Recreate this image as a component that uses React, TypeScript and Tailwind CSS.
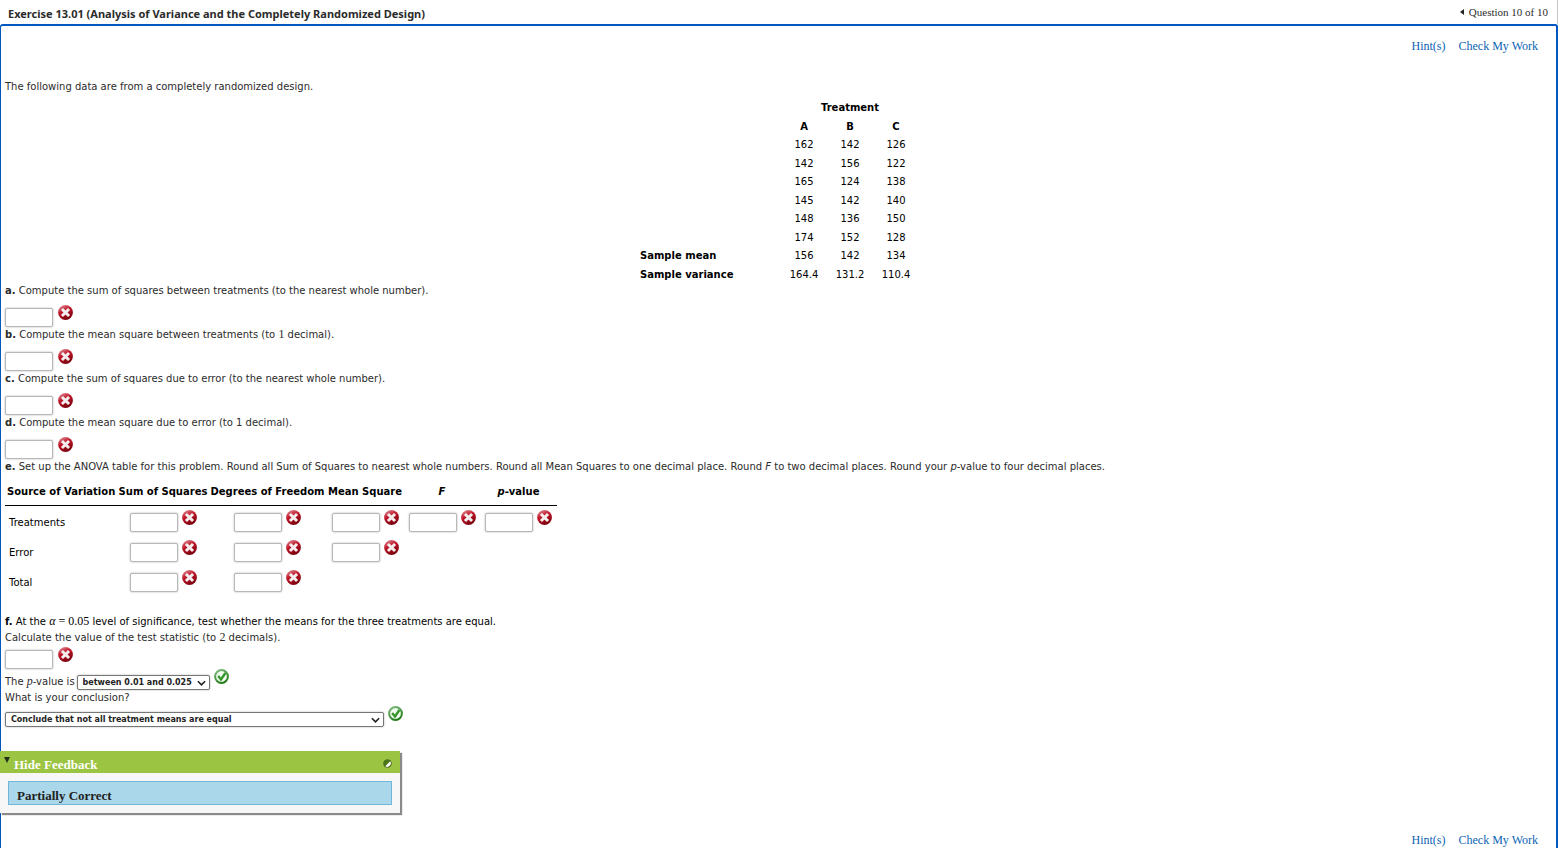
import type { ReactNode } from "react";

const treatmentRows = [
    { label: "", values: ["162", "142", "126"] },
    { label: "", values: ["142", "156", "122"] },
    { label: "", values: ["165", "124", "138"] },
    { label: "", values: ["145", "142", "140"] },
    { label: "", values: ["148", "136", "150"] },
    { label: "", values: ["174", "152", "128"] },
    { label: "Sample mean", values: ["156", "142", "134"] },
    { label: "Sample variance", values: ["164.4", "131.2", "110.4"] },
];

const anovaRows = [
    { label: "Treatments", fields: ["Sum of Squares", "Degrees of Freedom", "Mean Square", "F", "p-value"] },
    { label: "Error", fields: ["Sum of Squares", "Degrees of Freedom", "Mean Square"] },
    { label: "Total", fields: ["Sum of Squares", "Degrees of Freedom"] },
];

const WrongIcon = () => (
    <svg viewBox="0 0 15 15" className="w-[15px] h-[15px] shrink-0" role="img" aria-label="Incorrect">
        <defs>
            <linearGradient id="wrong" x1="0.2" y1="0" x2="0.7" y2="1">
                <stop offset="0" stopColor="#dc8c94" />
                <stop offset="0.4" stopColor="#c01629" />
                <stop offset="1" stopColor="#74000b" />
            </linearGradient>
        </defs>
        <circle cx="7.5" cy="7.5" r="7.4" fill="url(#wrong)" />
        <path d="M5 5l5 5M10 5l-5 5" stroke="#f4eeee" strokeWidth="3" strokeLinecap="square" />
    </svg>
);

const RightIcon = () => (
    <svg viewBox="0 0 15 15" className="w-[15px] h-[15px] shrink-0" role="img" aria-label="Correct">
        <defs>
            <linearGradient id="right" x1="0.2" y1="0" x2="0.7" y2="1">
                <stop offset="0" stopColor="#79b878" />
                <stop offset="1" stopColor="#1d7a12" />
            </linearGradient>
        </defs>
        <circle cx="7.5" cy="7.5" r="6.4" fill="#f1faef" stroke="url(#right)" strokeWidth="2" />
        <path d="M4.2 7l2.8 3.4L11.4 4" fill="none" stroke="#35962a" strokeWidth="2.4" />
    </svg>
);

const Answer = ({ label, className }: { label: string; className: string }) => (
    <div className={`flex items-start ${className}`}>
        <input
            type="text"
            aria-label={label}
            className="mt-[3px] w-12 h-[19px] px-1 rounded-xs border border-[#b8b8b8] bg-white text-[10px] shadow-[0_0_2px_#aaa]"
        />
        <WrongIcon />
    </div>
);

const Question = ({ id, children }: { id: string; children: ReactNode }) => (
    <div className="h-11">
        <p className="leading-[14px]">
            <b>{id}.</b> {children}
        </p>
        <Answer label={`Answer ${id}`} className="mt-[7px] gap-[5px]" />
    </div>
);

const Dropdown = ({ label, value, width }: { label: string; value: string; width: string }) => (
    <div className="flex items-start gap-1">
        <div className={`relative mt-1.5 ${width}`}>
            <select
                aria-label={label}
                className="block appearance-none w-full h-[15px] pl-[5px] pr-4 rounded-xs border border-[#767676] bg-white text-[8px] leading-[13px] font-bold text-[#222] shadow-[0_0_2px_#aaa]"
            >
                <option>{value}</option>
            </select>
            <svg viewBox="0 0 10 6" className="absolute right-1 top-[5px] w-[9px] h-[6px] pointer-events-none">
                <path d="M1 1l4 4 4-4" fill="none" stroke="#222" strokeWidth="1.8" />
            </svg>
        </div>
        <RightIcon />
    </div>
);

const MathText = ({ children }: { children: ReactNode }) => (
    <span className="font-['Liberation_Serif',serif] text-[12px] leading-none">{children}</span>
);

const Actions = () => (
    <div className="flex justify-end gap-[13px] pr-[18px] font-['Liberation_Serif',serif] text-[12px] leading-4 text-[#0a64b4]">
        <a href="#">Hint(s)</a>
        <a href="#">Check My Work</a>
    </div>
);

const Feedback = () => (
    <section className="w-[400px] -ml-px bg-[#f7f7f7] shadow-[2px_2px_1px_#8a8a8a]">
        <button className="flex w-full h-[22px] items-center bg-[#9bc442] pl-1 pr-2 text-left text-white">
            <svg viewBox="0 0 6 6" className="w-1.5 h-1.5 mb-1">
                <path d="M0 0h6L3 6z" fill="#263018" />
            </svg>
            <span className="ml-1 mt-1.5 font-['Liberation_Serif',serif] text-[13px] leading-4 font-bold">Hide Feedback</span>
            <svg viewBox="0 0 10 10" className="w-[9px] h-[9px] ml-auto mt-0.5">
                <circle cx="5" cy="5" r="4.3" fill="#4b7a18" stroke="#4d6822" />
                <path d="M8 2.6A3.9 3.9 0 0 1 2.6 8z" fill="#fff" />
            </svg>
        </button>
        <div className="p-2">
            <p className="h-6 border border-[#6fb6d8] bg-[#abd7ea] px-2 pt-1.5 font-['Liberation_Serif',serif] text-[13px] leading-4 font-bold text-[#222]">
                Partially Correct
            </p>
        </div>
    </section>
);

const App = () => {
    return (
        <div className="pr-[7px] bg-white font-['DejaVu_Sans',Verdana,sans-serif] text-[10px] leading-4 text-[#2b2b2b]">
            <header className="flex h-6 justify-between border-r border-[#c4c4c4] pl-2 pr-[9px]">
                <h1 className="mt-1.5 font-['Noto_Sans','Open_Sans',sans-serif] text-[11px] leading-4 font-bold">
                    Exercise 13.01 (Analysis of Variance and the Completely Randomized Design)
                </h1>
                <div className="flex items-center gap-[5px] font-['Liberation_Serif',serif] text-[11px]">
                    <svg viewBox="0 0 4 6" className="w-1 h-1.5">
                        <path d="M4 0v6L0 3z" fill="#222" />
                    </svg>
                    <span>Question 10 of 10</span>
                </div>
            </header>

            <main className="rounded-t-[3px] border-t-2 border-r-2 border-l border-[#0057c2] pt-3">
                <Actions />

                <p className="pl-1 mt-[25px]">The following data are from a completely randomized design.</p>

                <table className="mx-auto mt-1 table-fixed w-[281px] text-center text-black leading-4">
                    <colgroup>
                        <col />
                        <col className="w-[46px]" />
                        <col className="w-[46px]" />
                        <col className="w-[46px]" />
                    </colgroup>
                    <thead>
                        <tr className="h-[18px]">
                            <td />
                            <th colSpan={3}>Treatment</th>
                        </tr>
                        <tr className="h-[19px]">
                            <td />
                            <th>A</th>
                            <th>B</th>
                            <th>C</th>
                        </tr>
                    </thead>
                    <tbody>
                        {treatmentRows.map(({ label, values }, i) => (
                            <tr key={i} className="h-[18px] even:h-[19px]">
                                <th className="pl-0.5 text-left">{label}</th>
                                {values.map((value, j) => <td key={j}>{value}</td>)}
                            </tr>
                        ))}
                    </tbody>
                </table>

                <div className="pl-1">
                    <Question id="a">Compute the sum of squares between treatments (to the nearest whole number).</Question>
                    <Question id="b">Compute the mean square between treatments (to <MathText>1</MathText> decimal).</Question>
                    <Question id="c">Compute the sum of squares due to error (to the nearest whole number).</Question>
                    <Question id="d">Compute the mean square due to error (to 1 decimal).</Question>
                    <p className="leading-[14px]">
                        <b>e.</b> Set up the ANOVA table for this problem. Round all Sum of Squares to nearest whole numbers. Round all Mean Squares to one decimal place. Round <i>F</i> to two decimal places. Round your <i>p</i>-value to four decimal places.
                    </p>

                    {/* ANOVA table */}
                    <table className="mt-2 table-fixed border-separate border-spacing-0 w-[552px] text-black">
                        <colgroup>
                            <col className="w-[112px]" />
                            <col className="w-[92px]" />
                            <col className="w-[117px]" />
                            <col className="w-[78px]" />
                            <col className="w-[76px]" />
                            <col className="w-[77px]" />
                        </colgroup>
                        <thead>
                            <tr className="h-6 whitespace-nowrap *:border-b *:border-black *:pb-1">
                                <th className="pl-0.5 text-left">Source of Variation</th>
                                <th>Sum of Squares</th>
                                <th>Degrees of Freedom</th>
                                <th>Mean Square</th>
                                <th><i>F</i></th>
                                <th><i>p</i>-value</th>
                            </tr>
                        </thead>
                        <tbody>
                            {anovaRows.map(({ label, fields }) => (
                                <tr key={label} className="h-[30px] align-top">
                                    <th className="pl-1 pt-[9px] text-left font-normal">{label}</th>
                                    {fields.map((field) => (
                                        <td key={field} className="pt-1">
                                            <Answer label={`${label} ${field}`} className="justify-center gap-1" />
                                        </td>
                                    ))}
                                </tr>
                            ))}
                        </tbody>
                    </table>

                    <p className="mt-[17px] leading-[17px] text-black">
                        <b>f.</b> At the <MathText><i>α</i> = 0.05</MathText> level of significance, test whether the means for the three treatments are equal.
                    </p>
                    <p>Calculate the value of the test statistic (to <MathText>2</MathText> decimals).</p>
                    <Answer label="Test statistic" className="mt-px gap-[5px]" />
                    <div className="flex items-start gap-0.5">
                        <p className="mt-[5px]">
                            The <MathText><i>p</i></MathText>-value is
                        </p>
                        <Dropdown label="p-value range" value="between 0.01 and 0.025" width="w-[133px]" />
                    </div>
                    <p>What is your conclusion?</p>
                    <Dropdown label="Conclusion" value="Conclude that not all treatment means are equal" width="w-[379px]" />
                </div>

                <div className="mt-6 mb-[19px]">
                    <Feedback />
                </div>
                <Actions />
            </main>
        </div>
    );
};

export default App;
